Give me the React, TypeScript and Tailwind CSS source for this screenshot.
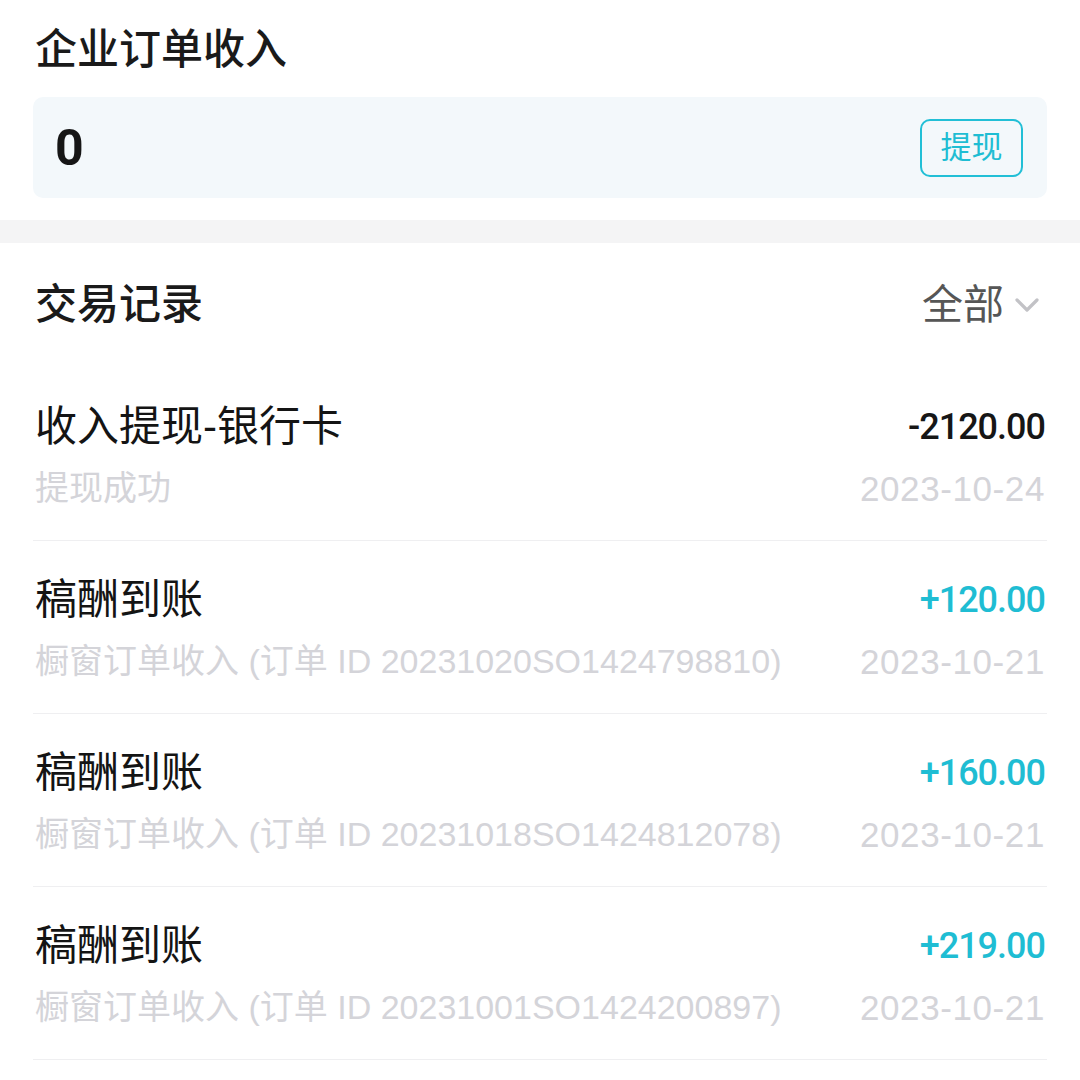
import React from 'react'

const cjk = "font-['Liberation_Sans','Noto_Sans_CJK_SC',sans-serif]"
const num = "font-['Roboto','Noto_Sans_CJK_SC',sans-serif]"

type Record = {
  title: string
  sub: string
  amount: string
  date: string
  income: boolean
}

const records: Record[] = [
  { title: '收入提现-银行卡', sub: '提现成功', amount: '-2120.00', date: '2023-10-24', income: false },
  { title: '稿酬到账', sub: '橱窗订单收入 (订单 ID 20231020SO1424798810)', amount: '+120.00', date: '2023-10-21', income: true },
  { title: '稿酬到账', sub: '橱窗订单收入 (订单 ID 20231018SO1424812078)', amount: '+160.00', date: '2023-10-21', income: true },
  { title: '稿酬到账', sub: '橱窗订单收入 (订单 ID 20231001SO1424200897)', amount: '+219.00', date: '2023-10-21', income: true },
]

function RecordRow({ r }: { r: Record }) {
  return (
    <div className="pt-[35px] pb-[32px] border-b border-[#efeff1]">
      <div className="flex items-center justify-between h-[48px]">
        <span className={`${cjk} text-[42px] leading-none text-[#141414] pl-[2px]`}>{r.title}</span>
        <span
          className={`${num} text-[36px] leading-none font-medium tracking-[-1px] pr-[2px] ${
            r.income ? 'text-[#1fbdd3]' : 'text-[#161616]'
          }`}
        >
          {r.amount}
        </span>
      </div>
      <div className="flex items-center justify-between h-[40px] mt-[17px]">
        <span className={`${cjk} text-[34px] leading-none text-[#d4d4d9] pl-[2px]`}>{r.sub}</span>
        <span className={`${cjk} text-[35px] leading-none tracking-[0.6px] text-[#d4d4d9] pr-[2px]`}>{r.date}</span>
      </div>
    </div>
  )
}

export default function App() {
  return (
    <div className="w-[1080px] h-[1080px] overflow-hidden bg-white">
      {/* balance card */}
      <div className="px-[33px] pt-[22px] pb-[22px]">
        <div className={`${cjk} text-[42px] leading-[56px] font-medium text-[#1a1a1a] pl-[2px]`}>企业订单收入</div>
        <div className="mt-[19px] h-[101px] rounded-[10px] bg-[#f3f8fb] flex items-center justify-between pl-[22px] pr-[24px]">
          <span className={`${num} text-[50px] leading-none font-bold text-[#161616]`}>0</span>
          <button className="w-[103px] h-[58px] rounded-[10px] border-2 border-[#22bfd6] flex items-center justify-center">
            <span className={`${cjk} text-[31px] leading-none text-[#1fbdd3]`}>提现</span>
          </button>
        </div>
      </div>

      <div className="h-[23px] bg-[#f4f4f5]" />

      {/* transaction list */}
      <div className="px-[33px]">
        <div className="flex items-center justify-between pt-[34px] pb-[35px]">
          <span className={`${cjk} text-[42px] leading-[56px] font-medium text-[#1a1a1a] pl-[2px]`}>交易记录</span>
          <div className="flex items-center gap-[10px] pr-[7px]">
            <span className={`${cjk} text-[41px] leading-none text-[#565656]`}>全部</span>
            <svg width="26" height="16" viewBox="0 0 26 16" fill="none">
              <path d="M3 3l10 10 10-10" stroke="#c2c2c6" strokeWidth="3.2" strokeLinecap="round" strokeLinejoin="round" />
            </svg>
          </div>
        </div>
        {records.map((r, i) => (
          <RecordRow key={i} r={r} />
        ))}
      </div>
    </div>
  )
}
